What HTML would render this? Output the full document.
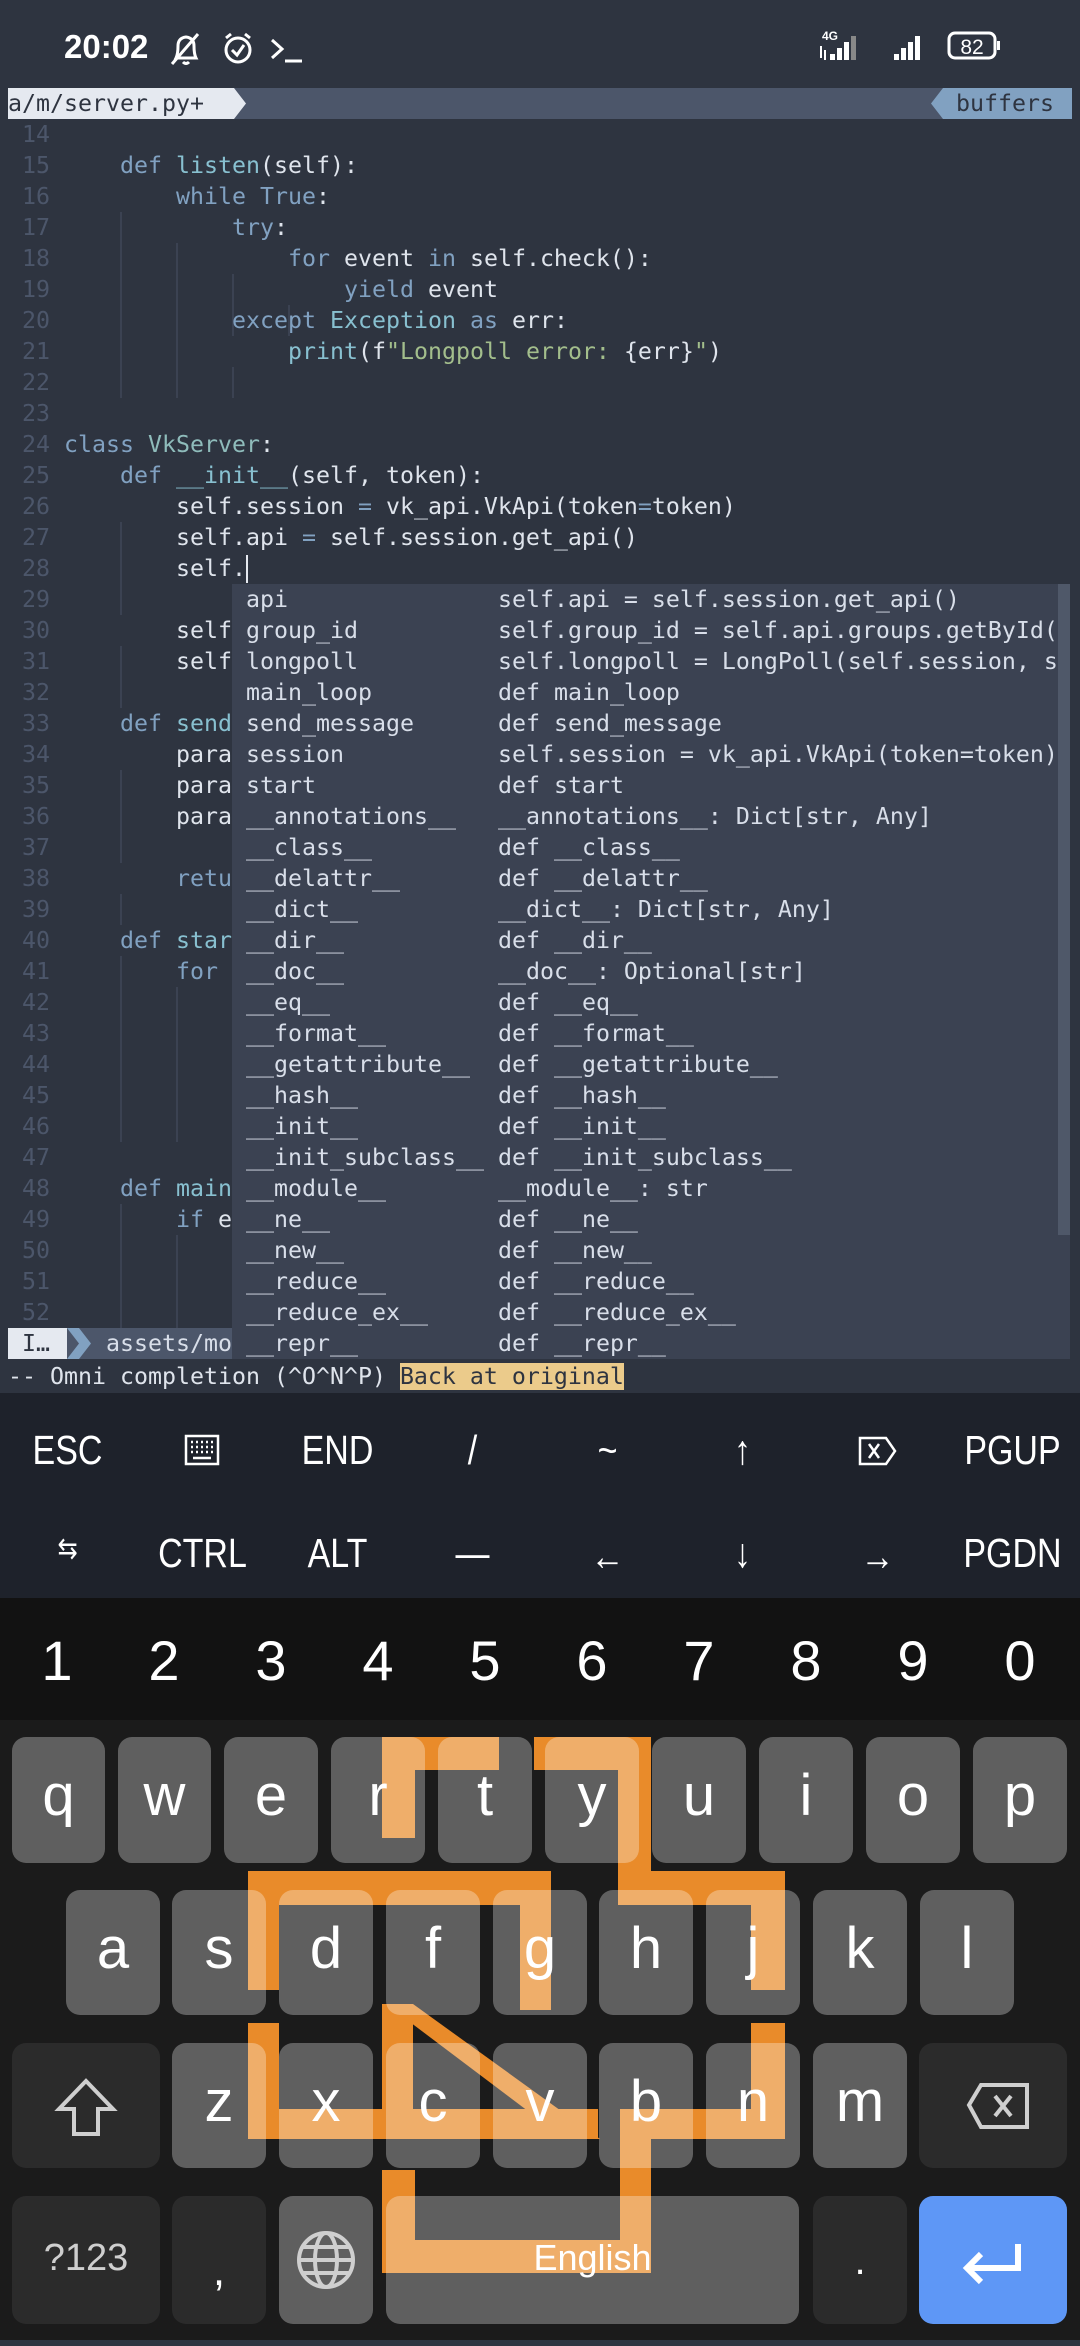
<!DOCTYPE html>
<html><head><meta charset="utf-8"><style>
*{margin:0;padding:0;box-sizing:border-box}
body{width:1080px;height:2340px;overflow:hidden;background:#2e3440;position:relative;font-family:"DejaVu Sans Mono","Liberation Mono",monospace}
.ln{position:absolute;left:8px;height:31px;line-height:31px;font-size:23.25px;white-space:pre;color:#dfe4ec}
.n{color:#4c566a}
.k{color:#81a1c1}.f{color:#88c0d0}.s{color:#a3be8c}.c{color:#8fbcbb}
.g{position:absolute;width:2px;background:#3b4252}
.pop{position:absolute;left:232px;top:584px;width:838px;height:775px;background:#3b4252;overflow:hidden}
.pr{position:absolute;left:14px;height:31px;line-height:31px;font-size:23.25px;white-space:pre;color:#d8dee9}
.sb{position:absolute;left:826px;top:0;width:12px;height:651px;background:#4f5869}
.ui{font-family:"Liberation Sans",sans-serif;color:#fff;position:absolute}
.ek{position:absolute;width:135px;text-align:center;font-family:"Liberation Sans",sans-serif;color:#fff;font-size:34px;transform:scaleY(1.2)}
.key{position:absolute;border-radius:14px;background:rgba(255,255,255,0.3);color:#fff;font-family:"Liberation Sans",sans-serif;font-size:58px;text-align:center;z-index:2}
.sp{background:rgba(255,255,255,0.07)}
</style></head><body>
<div class="ui" style="left:64px;top:28px;font-size:33px;font-weight:bold">20:02</div>
<svg style="position:absolute;left:168px;top:30px" width="140" height="40" viewBox="0 0 140 40" fill="none" stroke="#fff" stroke-width="3">
<path d="M8 28 Q10 24 10 16 Q10 8 18 7 Q26 8 26 16 Q26 24 28 28 Z"/><path d="M15 32 Q18 35 21 32"/><path d="M4 34 L30 4"/>
<circle cx="70" cy="20" r="12"/><path d="M64 20 L69 25 L76 15"/><path d="M58 8 L63 4 M82 8 L77 4"/>
<path d="M104 10 L114 19 L104 28"/><path d="M117 31 L134 31"/></svg>
<svg style="position:absolute;left:818px;top:28px" width="210" height="40" viewBox="0 0 210 40" fill="#fff">
<text x="4" y="12" font-size="12" font-family="Liberation Sans" font-weight="bold">4G</text>
<rect x="2" y="18" width="2" height="12"/><rect x="6" y="22" width="2" height="10"/>
<rect x="12" y="26" width="5" height="6"/><rect x="19" y="20" width="5" height="12"/><rect x="26" y="14" width="5" height="18"/><rect x="33" y="8" width="5" height="24" fill="#888"/>
<rect x="76" y="26" width="5" height="6"/><rect x="83" y="20" width="5" height="12"/><rect x="90" y="14" width="5" height="18"/><rect x="97" y="8" width="5" height="24"/>
<rect x="131" y="5" width="46" height="25" rx="6" fill="none" stroke="#fff" stroke-width="3"/><rect x="179" y="13" width="3" height="9"/>
<text x="154" y="26" font-size="21" font-family="Liberation Sans" text-anchor="middle">82</text></svg>

<div style="position:absolute;left:8px;top:88px;width:1064px;height:31px;background:#4c566a"></div>
<div class="ln" style="top:88px;background:#e5e9f0;color:#2e3440;width:226px">a/m/server.py+</div>
<svg style="position:absolute;left:234px;top:88px" width="12" height="31"><path d="M0 0 L12 15.5 L0 31Z" fill="#e5e9f0"/></svg>
<div class="ln" style="top:88px;left:943px;background:#81a1c1;color:#2e3440;width:129px;padding-left:13px">buffers</div>
<svg style="position:absolute;left:931px;top:88px" width="12" height="31"><path d="M12 0 L0 15.5 L12 31Z" fill="#81a1c1"/></svg>

<div class="g" style="left:120px;top:212px;height:186px"></div>
<div class="g" style="left:176px;top:243px;height:155px"></div>
<div class="g" style="left:232px;top:274px;height:62px"></div>
<div class="g" style="left:232px;top:367px;height:31px"></div>
<div class="g" style="left:288px;top:305px;height:31px"></div>
<div class="g" style="left:120px;top:522px;height:93px"></div>
<div class="g" style="left:120px;top:646px;height:62px"></div>
<div class="g" style="left:120px;top:770px;height:93px"></div>
<div class="g" style="left:120px;top:894px;height:31px"></div>
<div class="g" style="left:120px;top:956px;height:186px"></div>
<div class="g" style="left:176px;top:987px;height:155px"></div>
<div class="g" style="left:120px;top:1204px;height:124px"></div>
<div class="g" style="left:176px;top:1235px;height:93px"></div>

<div class="ln" style="top:119px"><span class="n"> 14</span></div>
<div class="ln" style="top:150px"><span class="n"> 15</span>     <span class="k">def</span> <span class="f">listen</span>(self):</div>
<div class="ln" style="top:181px"><span class="n"> 16</span>         <span class="k">while</span> <span class="k">True</span>:</div>
<div class="ln" style="top:212px"><span class="n"> 17</span>             <span class="k">try</span>:</div>
<div class="ln" style="top:243px"><span class="n"> 18</span>                 <span class="k">for</span> event <span class="k">in</span> self.check():</div>
<div class="ln" style="top:274px"><span class="n"> 19</span>                     <span class="k">yield</span> event</div>
<div class="ln" style="top:305px"><span class="n"> 20</span>             <span class="k">except</span> <span class="f">Exception</span> <span class="k">as</span> err:</div>
<div class="ln" style="top:336px"><span class="n"> 21</span>                 <span class="f">print</span>(f<span class="s">"Longpoll error: </span>{err}<span class="s">"</span>)</div>
<div class="ln" style="top:367px"><span class="n"> 22</span></div>
<div class="ln" style="top:398px"><span class="n"> 23</span></div>
<div class="ln" style="top:429px"><span class="n"> 24</span> <span class="k">class</span> <span class="c">VkServer</span>:</div>
<div class="ln" style="top:460px"><span class="n"> 25</span>     <span class="k">def</span> <span class="f">__init__</span>(self, token):</div>
<div class="ln" style="top:491px"><span class="n"> 26</span>         self.session <span class="k">=</span> vk_api.VkApi(token<span class="k">=</span>token)</div>
<div class="ln" style="top:522px"><span class="n"> 27</span>         self.api <span class="k">=</span> self.session.get_api()</div>
<div class="ln" style="top:553px"><span class="n"> 28</span>         self.</div>
<div style="position:absolute;left:246px;top:555px;width:2px;height:28px;background:#e5e9f0"></div>
<div class="ln" style="top:584px"><span class="n"> 29</span></div>
<div class="ln" style="top:615px"><span class="n"> 30</span>         self</div>
<div class="ln" style="top:646px"><span class="n"> 31</span>         self</div>
<div class="ln" style="top:677px"><span class="n"> 32</span></div>
<div class="ln" style="top:708px"><span class="n"> 33</span>     <span class="k">def</span> <span class="f">send</span></div>
<div class="ln" style="top:739px"><span class="n"> 34</span>         para</div>
<div class="ln" style="top:770px"><span class="n"> 35</span>         para</div>
<div class="ln" style="top:801px"><span class="n"> 36</span>         para</div>
<div class="ln" style="top:832px"><span class="n"> 37</span></div>
<div class="ln" style="top:863px"><span class="n"> 38</span>         <span class="k">retu</span></div>
<div class="ln" style="top:894px"><span class="n"> 39</span></div>
<div class="ln" style="top:925px"><span class="n"> 40</span>     <span class="k">def</span> <span class="f">star</span></div>
<div class="ln" style="top:956px"><span class="n"> 41</span>         <span class="k">for</span></div>
<div class="ln" style="top:987px"><span class="n"> 42</span></div>
<div class="ln" style="top:1018px"><span class="n"> 43</span></div>
<div class="ln" style="top:1049px"><span class="n"> 44</span></div>
<div class="ln" style="top:1080px"><span class="n"> 45</span></div>
<div class="ln" style="top:1111px"><span class="n"> 46</span></div>
<div class="ln" style="top:1142px"><span class="n"> 47</span></div>
<div class="ln" style="top:1173px"><span class="n"> 48</span>     <span class="k">def</span> <span class="f">main</span></div>
<div class="ln" style="top:1204px"><span class="n"> 49</span>         <span class="k">if</span> e</div>
<div class="ln" style="top:1235px"><span class="n"> 50</span></div>
<div class="ln" style="top:1266px"><span class="n"> 51</span></div>
<div class="ln" style="top:1297px"><span class="n"> 52</span></div>

<div style="position:absolute;left:8px;top:1328px;width:224px;height:31px;background:#4c566a"></div>
<div class="ln" style="top:1328px;background:#e5e9f0;color:#2e3440;width:59px;padding-left:14px">I…</div>
<svg style="position:absolute;left:67px;top:1328px" width="26" height="31"><path d="M0 0 L12 0 L24 15.5 L12 31 L0 31 L12 15.5Z" fill="#81a1c1"/></svg>
<div class="ln" style="top:1328px;left:106px;color:#d8dee9">assets/mo</div>

<div class="pop">
<div class="sb"></div>
<div class="pr" style="top:0">api               self.api = self.session.get_api()</div>
<div class="pr" style="top:31px">group_id          self.group_id = self.api.groups.getById(</div>
<div class="pr" style="top:62px">longpoll          self.longpoll = LongPoll(self.session, s</div>
<div class="pr" style="top:93px">main_loop         def main_loop</div>
<div class="pr" style="top:124px">send_message      def send_message</div>
<div class="pr" style="top:155px">session           self.session = vk_api.VkApi(token=token)</div>
<div class="pr" style="top:186px">start             def start</div>
<div class="pr" style="top:217px">__annotations__   __annotations__: Dict[str, Any]</div>
<div class="pr" style="top:248px">__class__         def __class__</div>
<div class="pr" style="top:279px">__delattr__       def __delattr__</div>
<div class="pr" style="top:310px">__dict__          __dict__: Dict[str, Any]</div>
<div class="pr" style="top:341px">__dir__           def __dir__</div>
<div class="pr" style="top:372px">__doc__           __doc__: Optional[str]</div>
<div class="pr" style="top:403px">__eq__            def __eq__</div>
<div class="pr" style="top:434px">__format__        def __format__</div>
<div class="pr" style="top:465px">__getattribute__  def __getattribute__</div>
<div class="pr" style="top:496px">__hash__          def __hash__</div>
<div class="pr" style="top:527px">__init__          def __init__</div>
<div class="pr" style="top:558px">__init_subclass__ def __init_subclass__</div>
<div class="pr" style="top:589px">__module__        __module__: str</div>
<div class="pr" style="top:620px">__ne__            def __ne__</div>
<div class="pr" style="top:651px">__new__           def __new__</div>
<div class="pr" style="top:682px">__reduce__        def __reduce__</div>
<div class="pr" style="top:713px">__reduce_ex__     def __reduce_ex__</div>
<div class="pr" style="top:744px">__repr__          def __repr__</div>
</div>

<div class="ln" style="top:1361px">-- Omni completion (^O^N^P) <span style="background:#ebcb8b;color:#2e3440">Back at original</span></div>

<div style="position:absolute;left:0;top:1393px;width:1080px;height:205px;background:#1e222b"></div>
<div class="ek" style="left:0;top:1432px">ESC</div>
<svg style="position:absolute;left:184px;top:1434px" width="36" height="32" fill="none" stroke="#fff" stroke-width="2.5"><rect x="2" y="2" width="32" height="28"/><path d="M7 8h2M12 8h2M17 8h2M22 8h2M27 8h2M7 13h2M12 13h2M17 13h2M22 13h2M27 13h2M7 18h2M12 18h2M17 18h2M22 18h2M27 18h2M9 24h18"/></svg>
<div class="ek" style="left:270px;top:1432px">END</div>
<div class="ek" style="left:405px;top:1432px">/</div>
<div class="ek" style="left:540px;top:1432px">~</div>
<div class="ek" style="left:675px;top:1432px">↑</div>
<svg style="position:absolute;left:858px;top:1436px" width="40" height="30" fill="none" stroke="#fff" stroke-width="2.5"><path d="M2 2 H28 L37 15 L28 28 H2Z"/><path d="M11 8 L21 22 M21 8 L11 22"/></svg>
<div class="ek" style="left:945px;top:1432px">PGUP</div>
<div class="ek" style="left:0;top:1535px;font-size:24px">⇆</div>
<div class="ek" style="left:135px;top:1535px">CTRL</div>
<div class="ek" style="left:270px;top:1535px">ALT</div>
<div class="ek" style="left:405px;top:1535px">—</div>
<div class="ek" style="left:540px;top:1538px">←</div>
<div class="ek" style="left:675px;top:1535px">↓</div>
<div class="ek" style="left:810px;top:1538px">→</div>
<div class="ek" style="left:945px;top:1535px">PGDN</div>

<div style="position:absolute;left:0;top:1598px;width:1080px;height:122px;background:#121212"></div>
<div class="ui" style="left:0;top:1628px;width:1080px;font-size:56px">
<span style="position:absolute;left:32px;width:50px;text-align:center">1</span>
<span style="position:absolute;left:139px;width:50px;text-align:center">2</span>
<span style="position:absolute;left:246px;width:50px;text-align:center">3</span>
<span style="position:absolute;left:353px;width:50px;text-align:center">4</span>
<span style="position:absolute;left:460px;width:50px;text-align:center">5</span>
<span style="position:absolute;left:567px;width:50px;text-align:center">6</span>
<span style="position:absolute;left:674px;width:50px;text-align:center">7</span>
<span style="position:absolute;left:781px;width:50px;text-align:center">8</span>
<span style="position:absolute;left:888px;width:50px;text-align:center">9</span>
<span style="position:absolute;left:995px;width:50px;text-align:center">0</span>
</div>

<div style="position:absolute;left:0;top:1720px;width:1080px;height:620px;background:#1b1b1b"></div>
<svg style="position:absolute;left:0;top:0;z-index:1" width="1080" height="2340" fill="#e98b2a">
<rect x="382" y="1737" width="33" height="101"/><rect x="382" y="1737" width="117" height="33"/>
<rect x="534" y="1737" width="117" height="33"/><rect x="618" y="1737" width="33" height="168"/>
<rect x="618" y="1871" width="167" height="34"/><rect x="751" y="1871" width="34" height="119"/>
<rect x="248" y="1871" width="303" height="34"/><rect x="248" y="1871" width="31" height="119"/>
<rect x="520" y="1900" width="31" height="110"/>
<path d="M386 2004 L413 2004 L600 2139 L565 2139Z"/><rect x="382" y="2004" width="31" height="135"/>
<rect x="248" y="2023" width="31" height="116"/><rect x="248" y="2109" width="350" height="30"/>
<rect x="751" y="2023" width="34" height="116"/><rect x="620" y="2109" width="165" height="30"/>
<rect x="620" y="2109" width="31" height="164"/><rect x="382" y="2240" width="269" height="33"/>
<rect x="382" y="2170" width="33" height="103"/>
</svg>
<div class="key" style="left:12px;top:1737px;width:93px;height:126px;line-height:118px">q</div>
<div class="key" style="left:118px;top:1737px;width:93px;height:126px;line-height:118px">w</div>
<div class="key" style="left:224px;top:1737px;width:94px;height:126px;line-height:118px">e</div>
<div class="key" style="left:331px;top:1737px;width:94px;height:126px;line-height:118px">r</div>
<div class="key" style="left:438px;top:1737px;width:94px;height:126px;line-height:118px">t</div>
<div class="key" style="left:545px;top:1737px;width:94px;height:126px;line-height:118px">y</div>
<div class="key" style="left:652px;top:1737px;width:94px;height:126px;line-height:118px">u</div>
<div class="key" style="left:759px;top:1737px;width:94px;height:126px;line-height:118px">i</div>
<div class="key" style="left:866px;top:1737px;width:94px;height:126px;line-height:118px">o</div>
<div class="key" style="left:973px;top:1737px;width:94px;height:126px;line-height:118px">p</div>
<div class="key" style="left:66px;top:1890px;width:94px;height:125px;line-height:118px">a</div>
<div class="key" style="left:172px;top:1890px;width:94px;height:125px;line-height:118px">s</div>
<div class="key" style="left:279px;top:1890px;width:94px;height:125px;line-height:118px">d</div>
<div class="key" style="left:386px;top:1890px;width:94px;height:125px;line-height:118px">f</div>
<div class="key" style="left:493px;top:1890px;width:94px;height:125px;line-height:118px">g</div>
<div class="key" style="left:599px;top:1890px;width:94px;height:125px;line-height:118px">h</div>
<div class="key" style="left:706px;top:1890px;width:94px;height:125px;line-height:118px">j</div>
<div class="key" style="left:813px;top:1890px;width:94px;height:125px;line-height:118px">k</div>
<div class="key" style="left:920px;top:1890px;width:94px;height:125px;line-height:118px">l</div>
<div class="key sp" style="left:12px;top:2043px;width:148px;height:125px"><svg width="148" height="125" fill="none" stroke="#cfcfcf" stroke-width="4"><path d="M74 38 L101 66 L86 66 L86 91 L62 91 L62 66 L47 66Z"/></svg></div>
<div class="key" style="left:172px;top:2043px;width:94px;height:125px;line-height:118px">z</div>
<div class="key" style="left:279px;top:2043px;width:94px;height:125px;line-height:118px">x</div>
<div class="key" style="left:386px;top:2043px;width:94px;height:125px;line-height:118px">c</div>
<div class="key" style="left:493px;top:2043px;width:94px;height:125px;line-height:118px">v</div>
<div class="key" style="left:599px;top:2043px;width:94px;height:125px;line-height:118px">b</div>
<div class="key" style="left:706px;top:2043px;width:94px;height:125px;line-height:118px">n</div>
<div class="key" style="left:813px;top:2043px;width:94px;height:125px;line-height:118px">m</div>
<div class="key sp" style="left:919px;top:2043px;width:148px;height:125px"><svg width="148" height="125" fill="none" stroke="#cfcfcf" stroke-width="4"><path d="M50 62 L62 42 L108 42 L108 84 L62 84Z"/><path d="M76 53 L92 73 M92 53 L76 73"/></svg></div>
<div class="key sp" style="left:12px;top:2196px;width:148px;height:128px;line-height:124px;font-size:38px;color:#cfcfcf">?123</div>
<div class="key sp" style="left:172px;top:2196px;width:94px;height:128px;line-height:150px;font-size:44px">,</div>
<div class="key" style="left:279px;top:2196px;width:94px;height:128px"><svg width="94" height="128" fill="none" stroke="#cfcfcf" stroke-width="4"><circle cx="47" cy="64" r="27"/><ellipse cx="47" cy="64" rx="11" ry="27"/><path d="M20 64 H74 M24 51 H70 M24 77 H70"/></svg></div>
<div class="key" style="left:386px;top:2196px;width:413px;height:128px;line-height:124px;font-size:36px">English</div>
<div class="key sp" style="left:813px;top:2196px;width:94px;height:128px;line-height:130px;font-size:40px">.</div>
<div class="key" style="left:919px;top:2196px;width:148px;height:128px;background:#5e97f6"><svg width="148" height="128" fill="none" stroke="#fff" stroke-width="6"><path d="M99 48 V72 H50 M62 58 L48 72 L62 86"/></svg></div>
</body></html>
